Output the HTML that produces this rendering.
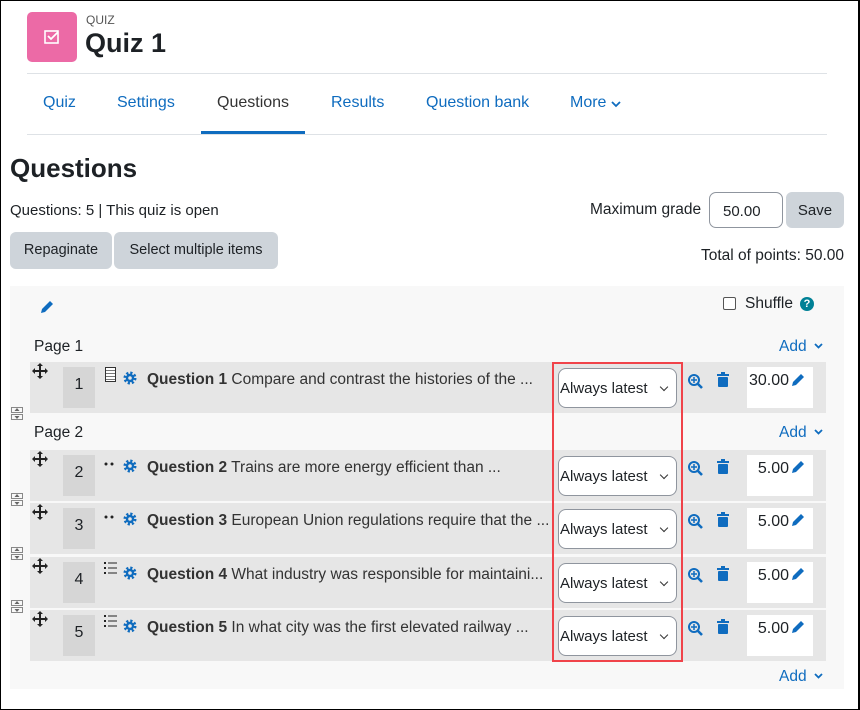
<!DOCTYPE html>
<html><head><meta charset="utf-8"><style>
*{margin:0;padding:0;box-sizing:border-box}
body{width:860px;height:710px;position:relative;overflow:hidden;background:#fff;font-family:"Liberation Sans",sans-serif;color:#1d2125;font-size:15px}
.a{position:absolute;white-space:nowrap}
.blue{color:#0f6cbf}
.row{position:absolute;left:30px;width:796px;height:51px;background:#e6e6e6}
.num{position:absolute;left:33px;top:5px;width:32px;height:41px;background:#d6d6d6;text-align:center;padding-top:9px;font-size:16px}
.sel{position:absolute;left:528px;top:6px;width:119px;height:40px;background:#fff;border:1px solid #8f959e;border-radius:8px;font-size:15px;padding:11px 0 0 1px}
.sel:after{content:"";position:absolute;right:9px;top:15px;width:5px;height:5px;border-right:1.5px solid #333;border-bottom:1.5px solid #333;transform:rotate(45deg)}
.gr{position:absolute;left:717px;top:5px;width:66px;height:41px;background:#fff;text-align:right;padding:5px 24px 0 0;font-size:16px}
.qt{position:absolute;left:117px;top:9px;font-size:15.5px;color:#333}
.qt b{color:#333}
.mv{position:absolute;left:2px;top:1px}
.gear{position:absolute;left:93px;top:9px}
.ico{position:absolute;left:74px;top:4px}
</style></head><body>
<div style="position:absolute;inset:0;border:1px solid #000;border-right:2px solid #000"></div>
<div class="a" style="left:27px;top:12px;width:50px;height:50px;background:#ec6aa6;border-radius:5px">
<svg width="50" height="50"><rect x="18" y="19" width="13" height="12" fill="none" stroke="#fff" stroke-width="1.6"/><path d="M21 24l3 3 7-7" fill="none" stroke="#fff" stroke-width="1.8"/></svg></div>
<div class="a" style="left:86px;top:13px;font-size:12px;color:#555">QUIZ</div>
<div class="a" style="left:85px;top:28px;font-size:27px;font-weight:bold;color:#1d2125">Quiz 1</div>
<div class="a" style="left:27px;top:73px;width:800px;height:1px;background:#dee2e6"></div>
<div class="a" style="left:27px;top:134px;width:800px;height:1px;background:#dee2e6"></div>
<div class="a" style="left:201px;top:131px;width:104px;height:3px;background:#0f6cbf"></div>
<div class="a blue" style="left:43px;top:94px;font-size:16px">Quiz</div>
<div class="a blue" style="left:117px;top:94px;font-size:16px">Settings</div>
<div class="a" style="left:217px;top:94px;font-size:16px;color:#333">Questions</div>
<div class="a blue" style="left:331px;top:94px;font-size:16px">Results</div>
<div class="a blue" style="left:426px;top:94px;font-size:16px">Question bank</div>
<div class="a blue" style="left:570px;top:94px;font-size:16px">More</div>
<svg class="a" style="left:611px;top:100px" width="10" height="8"><path d="M1 2l4 4 4-4" fill="none" stroke="#0f6cbf" stroke-width="1.8"/></svg>
<div class="a" style="left:10px;top:153px;font-size:26px;font-weight:bold">Questions</div>
<div class="a" style="left:10px;top:202px;font-size:15px">Questions: 5 | This quiz is open</div>
<div class="a" style="left:10px;top:232px;width:102px;height:37px;background:#ced4da;border-radius:6px;text-align:center;padding-top:10px;font-size:14.5px">Repaginate</div>
<div class="a" style="left:114px;top:232px;width:164px;height:37px;background:#ced4da;border-radius:6px;text-align:center;padding-top:10px;font-size:14.5px">Select multiple items</div>
<div class="a" style="left:590px;top:201px;font-size:15.5px">Maximum grade</div>
<div class="a" style="left:709px;top:192px;width:74px;height:36px;border:1px solid #8f959e;border-radius:7px;padding:10px 0 0 13px;font-size:15px">50.00</div>
<div class="a" style="left:786px;top:192px;width:58px;height:36px;background:#ced4da;border-radius:6px;text-align:center;padding-top:10px;font-size:15px">Save</div>
<div class="a" style="right:16px;top:247px;font-size:15.5px">Total of points: 50.00</div>
<div class="a" style="left:10px;top:286px;width:834px;height:403px;background:#f8f8f8"></div>
<svg class="a" style="left:39px;top:299px" width="16" height="16"><path d="M2 14l1-4 8-8 3 3-8 8z" fill="#0f6cbf"/></svg>
<div class="a" style="left:723px;top:297px;width:13px;height:13px;border:1.5px solid #555;border-radius:2px;background:#fff"></div>
<div class="a" style="left:745px;top:295px;font-size:15.5px">Shuffle</div>
<div class="a" style="left:800px;top:297px;width:14px;height:14px;border-radius:50%;background:#008196;color:#fff;font-size:11px;font-weight:bold;text-align:center;line-height:14px">?</div>
<div class="a" style="left:34px;top:338px;font-size:15.5px">Page 1</div>
<div class="a" style="left:34px;top:424px;font-size:15.5px">Page 2</div>
<div class="a blue" style="left:779px;top:338px;font-size:15.5px">Add</div>
<div class="a blue" style="left:779px;top:424px;font-size:15.5px">Add</div>
<div class="a blue" style="left:779px;top:668px;font-size:15.5px">Add</div>

<svg width="0" height="0" style="position:absolute">
<defs>
<g id="mvg"><path d="M8 1v14M1 8h14" stroke="#222" stroke-width="2"/><path d="M8 0l3 3H5zM8 16l3-3H5zM0 8l3-3v6zM16 8l-3-3v6z" fill="#222"/></g>
<g id="gr"><circle cx="7" cy="7" r="5.2" fill="none" stroke="#0f6cbf" stroke-width="2.6" stroke-dasharray="2.2 1.9"/><circle cx="7" cy="7" r="4.2" fill="#0f6cbf"/><circle cx="7" cy="7" r="1.8" fill="#e6e6e6"/></g>
<g id="ls"><g fill="#222"><rect x="0" y="1" width="2" height="2"/><rect x="0" y="6" width="2" height="2"/><rect x="0" y="11" width="2" height="2"/><rect x="4" y="1.5" width="9" height="1"/><rect x="4" y="6.5" width="9" height="1"/><rect x="4" y="11.5" width="9" height="1"/></g></g>
</defs></svg>

<div class="row" style="top:362px"><svg class="mv" width="16" height="16"><use href="#mvg"/></svg><div class="num">1</div><div class="a" style="left:75px;top:5px;width:11px;height:15px;border:1px solid #333;background:repeating-linear-gradient(#fff 0 2px,#777 2px 3px)"></div><svg class="gear" width="14" height="14"><use href="#gr"/></svg><div class="qt"><b>Question 1</b> Compare and contrast the histories of the ...</div><div class="sel">Always latest</div><div class="gr">30.00</div></div>
<div class="row" style="top:450px"><svg class="mv" width="16" height="16"><use href="#mvg"/></svg><div class="num">2</div><svg class="ico" width="14" height="14"><circle cx="2" cy="10" r="1.5" fill="#222"/><circle cx="8" cy="10" r="1.5" fill="#222"/></svg><svg class="gear" width="14" height="14"><use href="#gr"/></svg><div class="qt"><b>Question 2</b> Trains are more energy efficient than ...</div><div class="sel">Always latest</div><div class="gr">5.00</div></div>
<div class="row" style="top:503px"><svg class="mv" width="16" height="16"><use href="#mvg"/></svg><div class="num">3</div><svg class="ico" width="14" height="14"><circle cx="2" cy="10" r="1.5" fill="#222"/><circle cx="8" cy="10" r="1.5" fill="#222"/></svg><svg class="gear" width="14" height="14"><use href="#gr"/></svg><div class="qt"><b>Question 3</b> European Union regulations require that the ...</div><div class="sel">Always latest</div><div class="gr">5.00</div></div>
<div class="row" style="top:557px"><svg class="mv" width="16" height="16"><use href="#mvg"/></svg><div class="num">4</div><svg class="ico" width="14" height="14"><use href="#ls"/></svg><svg class="gear" width="14" height="14"><use href="#gr"/></svg><div class="qt"><b>Question 4</b> What industry was responsible for maintaini...</div><div class="sel">Always latest</div><div class="gr">5.00</div></div>
<div class="row" style="top:610px"><svg class="mv" width="16" height="16"><use href="#mvg"/></svg><div class="num">5</div><svg class="ico" width="14" height="14"><use href="#ls"/></svg><svg class="gear" width="14" height="14"><use href="#gr"/></svg><div class="qt"><b>Question 5</b> In what city was the first elevated railway ...</div><div class="sel">Always latest</div><div class="gr">5.00</div></div>

<svg class="a" style="left:0;top:0" width="860" height="710">
<g fill="none" stroke="#0f6cbf" stroke-width="1.8">
<path id="ch" d="M815 344l3.5 3.5 3.5-3.5"/>
<use href="#ch" y="86"/><use href="#ch" y="330"/>
</g>
<g fill="none" stroke="#0f6cbf" stroke-width="2">
<g id="z"><circle cx="694" cy="380" r="5"/><path d="M698 384l4 4" stroke-width="2.6"/><path d="M694 377v6M691 380h6" stroke-width="1.5"/></g>
<use href="#z" y="87"/><use href="#z" y="140"/><use href="#z" y="194"/><use href="#z" y="247"/>
</g>
<g fill="#0f6cbf">
<g id="t"><rect x="717" y="374" width="12" height="2"/><rect x="721" y="372" width="4" height="2"/><rect x="718" y="377" width="10" height="10" rx="1"/></g>
<use href="#t" y="87"/><use href="#t" y="140"/><use href="#t" y="194"/><use href="#t" y="247"/>
<g id="p"><path d="M792 386l1-4 8-8 3 3-8 8z"/></g>
<use href="#p" y="87"/><use href="#p" y="140"/><use href="#p" y="194"/><use href="#p" y="247"/>
</g>
<g stroke="#888" stroke-width="1">
<g id="s"><path d="M11 407.5h12M11 412.5h12M11 414.5h12M11 419.5h12M11.5 407v5M22.5 407v5M11.5 415v5M22.5 415v5" fill="none"/><path d="M17 408l-2.5 3h5zM17 419l-2.5-3h5z" fill="#666" stroke="none"/></g>
<use href="#s" y="86"/><use href="#s" y="140"/><use href="#s" y="193"/>
</g>
<rect x="553" y="363" width="129" height="298" fill="none" stroke="#f0434a" stroke-width="2"/>
</svg>
</body></html>
